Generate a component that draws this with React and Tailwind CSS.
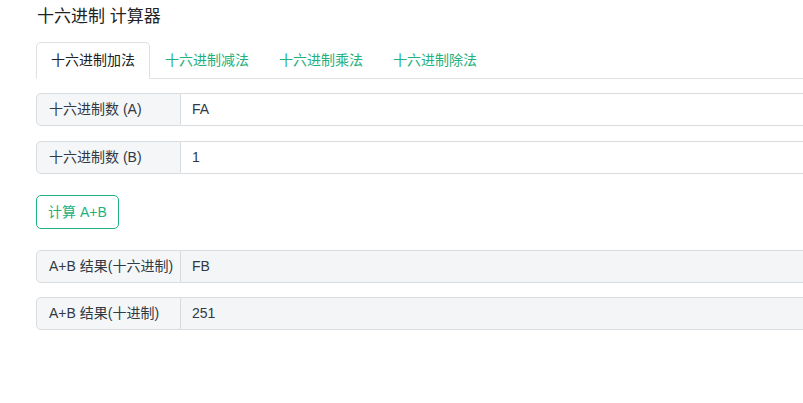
import React, { useState } from 'react';

const font = { fontFamily: '"Helvetica Neue", "Liberation Sans", "Noto Sans CJK SC", sans-serif' };

function Field({ label, value, readOnly, onChange }) {
  return (
    <div className="flex h-[33px] text-[14px]">
      <div className="w-[145px] shrink-0 flex items-center px-3 bg-[#f5f6f8] border border-[#d9dcdf] rounded-l-[5px] text-[#2f3a45] whitespace-nowrap">
        {label}
      </div>
      <input
        value={value}
        readOnly={readOnly}
        onChange={onChange}
        className={`flex-1 min-w-0 px-[11px] border border-l-0 border-[#d9dcdf] rounded-r-[5px] text-[#2f3a45] outline-none ${readOnly ? 'bg-[#f4f5f6]' : 'bg-white'}`}
      />
    </div>
  );
}

export default function App() {
  const [a, setA] = useState('FA');
  const [b, setB] = useState('1');
  const [tab, setTab] = useState(0);
  const tabs = ['十六进制加法', '十六进制减法', '十六进制乘法', '十六进制除法'];

  return (
    <div className="w-screen h-[403px] overflow-hidden bg-white" style={font}>
      <div className="w-[840px] pl-9">
        <h1 className="text-[17px] leading-5 text-[#222] pt-[7px] pl-[1px]">十六进制 计算器</h1>

        <div className="mt-[15px] flex border-b border-[#dde1e4] text-[14px]">
          {tabs.map((t, i) => (
            <button
              key={t}
              onClick={() => setTab(i)}
              className={`h-[37px] px-[14px] -mb-px rounded-t-[5px] border ${i === tab ? 'bg-white border-[#dde1e4] border-b-white text-[#222]' : 'border-transparent text-[#22b07d]'}`}
            >
              {t}
            </button>
          ))}
        </div>

        <div className="mt-[14px] flex flex-col gap-[15px]">
          <Field label="十六进制数 (A)" value={a} onChange={(e) => setA(e.target.value)} />
          <Field label="十六进制数 (B)" value={b} onChange={(e) => setB(e.target.value)} />
        </div>

        <button className="mt-[21px] h-[34px] px-[11px] border border-[#22b07d] rounded-[5px] text-[#22b07d] text-[14px]">
          计算 A+B
        </button>

        <div className="mt-[21px] flex flex-col gap-[14px]">
          <Field label="A+B 结果(十六进制)" value="FB" readOnly />
          <Field label="A+B 结果(十进制)" value="251" readOnly />
        </div>
      </div>
    </div>
  );
}
